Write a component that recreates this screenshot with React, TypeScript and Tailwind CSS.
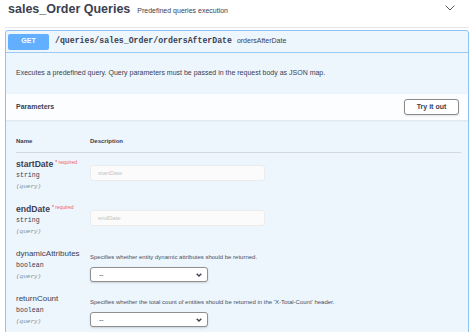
import React from 'react';

type Param = {
  name: string;
  type: string;
  required?: boolean;
  description?: string;
  kind: 'input' | 'select';
};

const params: Param[] = [
  { name: 'startDate', type: 'string', required: true, kind: 'input' },
  { name: 'endDate', type: 'string', required: true, kind: 'input' },
  {
    name: 'dynamicAttributes',
    type: 'boolean',
    description: 'Specifies whether entity dynamic attributes should be returned.',
    kind: 'select',
  },
  {
    name: 'returnCount',
    type: 'boolean',
    description: "Specifies whether the total count of entities should be returned in the 'X-Total-Count' header.",
    kind: 'select',
  },
];

function ParamRow({ p }: { p: Param }) {
  return (
    <div className="flex h-[45px]">
      <div className="w-[74px] shrink-0">
        <div className="flex h-[12px] items-start leading-[12px]">
          <span className={p.required ? 'text-[8.6px] font-semibold' : 'text-[8px]'}>{p.name}</span>
          {p.required && (
            <span className="ml-[2px] text-[5px] leading-[8px] text-[#f0606a]">
              <span className="text-[#e8303a]">*</span> required
            </span>
          )}
        </div>
        <div className="h-[11px] font-['Liberation_Mono',monospace] text-[6.6px] leading-[11px] text-[#3b4151]">
          {p.type}
        </div>
        <div className="h-[11px] font-['Liberation_Mono',monospace] text-[6px] italic leading-[11px] text-[#8a8a8a]">
          (query)
        </div>
      </div>
      <div className="flex-1">
        {p.kind === 'input' ? (
          <input
            disabled
            placeholder={p.name}
            className="mt-[2px] h-[16px] w-[175px] rounded-[3px] border border-[#ececec] bg-[#fbfbfb] pl-[7px] text-[6px] text-[#3b4151] placeholder:text-[#c4c4c4]"
          />
        ) : (
          <>
            <p className="pt-[5px] text-[6px] leading-[8px] text-[#4a5060]">{p.description}</p>
            <div className="mt-[6px] flex h-[15px] w-[118px] items-center justify-between rounded-[3px] border border-[#8f8f8f] bg-white pl-[8px] pr-[5px] shadow-[0_1px_2px_rgba(0,0,0,0.15)]">
              <span className="text-[7px] leading-none text-[#3b4151]">--</span>
              <svg width="6" height="4" viewBox="0 0 6 4">
                <path d="M0.7 0.7 L3 3 L5.3 0.7" fill="none" stroke="#3b4151" strokeWidth="1.4" />
              </svg>
            </div>
          </>
        )}
      </div>
    </div>
  );
}

export default function App() {
  return (
    <div className="h-[332px] w-[474px] overflow-hidden bg-white px-[5px] font-['Liberation_Sans',Arial,sans-serif] text-[#3b4151]">
      {/* tag header */}
      <div className="flex h-[28px] border-b border-[#e6e6e6] pl-[3px] pt-[2px]">
        <div className="flex items-baseline">
          <h2 className="text-[12.5px] font-bold leading-[14px]">sales_Order Queries</h2>
          <span className="ml-[7px] text-[7px] leading-[14px]">Predefined queries execution</span>
        </div>
        <svg className="ml-auto mr-[14px] mt-[3px]" width="10" height="6" viewBox="0 0 10 6">
          <path d="M0.6 0.6 L5 5 L9.4 0.6" fill="none" stroke="#555" strokeWidth="1" />
        </svg>
      </div>

      {/* operation block */}
      <div className="mt-[2px] h-[320px] rounded-[3px] border border-[#8fc3f5] bg-[#edf5fd]">
        <div className="flex h-[22px] items-center border-b border-[#9ccaf6] px-[2px]">
          <span className="flex h-[16px] w-[41px] items-center justify-center rounded-[2px] bg-[#61affe] text-[7px] font-bold text-white">
            GET
          </span>
          <span className="ml-[6px] font-['Liberation_Mono',monospace] text-[8.2px] font-bold">
            /queries/sales_Order/ordersAfterDate
          </span>
          <span className="ml-[5px] text-[7px]">ordersAfterDate</span>
        </div>

        <div className="h-[41px] px-[10px] pt-[15px]">
          <p className="text-[7px] leading-[9px]">
            Executes a predefined query. Query parameters must be passed in the request body as JSON map.
          </p>
        </div>

        <div className="flex h-[26px] items-center justify-between bg-[#fbfdff] pl-[10px] pr-[9px] shadow-[0_1px_2px_rgba(0,0,0,0.08)]">
          <h4 className="text-[7px] font-bold">Parameters</h4>
          <button className="h-[16px] w-[55px] rounded-[3px] border border-[#8a8a8a] bg-white text-[7px] font-bold text-[#3b4151] shadow-[0_1px_2px_rgba(0,0,0,0.1)]">
            Try it out
          </button>
        </div>

        <div className="pl-[10px] pr-[7px] pt-[17px]">
          <div className="flex border-b border-[#d3d8de] pb-[7px] text-[6px] font-bold leading-[8px]">
            <span className="w-[74px]">Name</span>
            <span>Description</span>
          </div>
          <div className="pt-[5px]">
            {params.map((p) => (
              <ParamRow key={p.name} p={p} />
            ))}
          </div>
        </div>
      </div>
    </div>
  );
}
